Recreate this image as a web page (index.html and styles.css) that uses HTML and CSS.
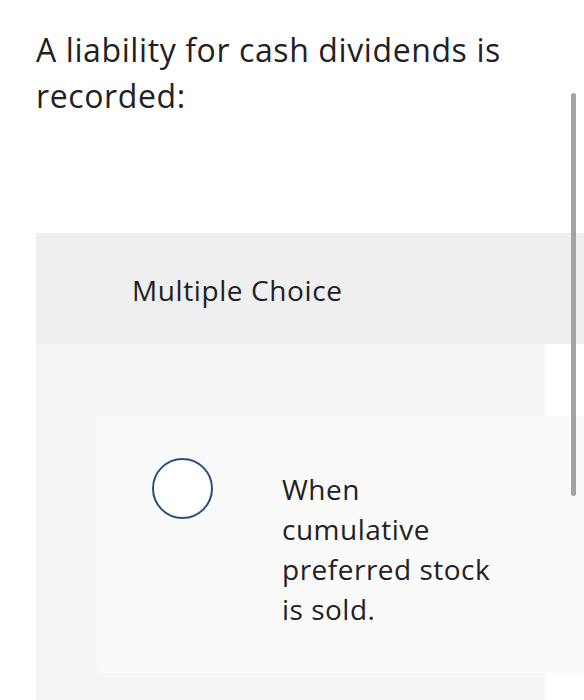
FILE: index.html
```html
<!DOCTYPE html>
<html>
<head>
<meta charset="utf-8">
<link rel="stylesheet" href="styles.css">
</head>
<body>
<div class="page">
  <h1 class="question">A liability for cash dividends is recorded:</h1>
  <section class="panel">
    <div class="panel-head">Multiple Choice</div>
    <div class="panel-body">
      <label class="option">
        <span class="radio"></span>
        <span class="option-text">When cumulative preferred stock is sold.</span>
      </label>
    </div>
  </section>
</div>
<div class="scrollbar"></div>
</body>
</html>
```
FILE: styles.css
```css
html, body {
  margin: 0;
  padding: 0;
  background: #ffffff;
  overflow: hidden;
}
body {
  width: 584px;
  height: 700px;
  font-family: "Open Sans", "Liberation Sans", sans-serif;
  color: #222222;
}
.page {
  padding: 27px 0 0 36px;
}
.question {
  margin: 0;
  width: 500px;
  font-size: 32px;
  font-weight: 400;
  line-height: 46px;
  letter-spacing: 0.6px;
}
.panel {
  margin-top: 114px;
}
.panel-head {
  background: #efefef;
  height: 111px;
  box-sizing: border-box;
  padding: 41px 0 0 96px;
  font-size: 28px;
  line-height: 32px;
  letter-spacing: 0.6px;
}
.panel-body {
  width: 509px;
  background: #f5f5f5;
  padding-top: 72px;
  height: 284px;
}
.option {
  margin-left: 60px;
  width: 488px;
  height: 257px;
  box-sizing: border-box;
  background: #fafafa;
  border-radius: 6px 0 0 6px;
  display: flex;
  align-items: flex-start;
  padding: 42px 0 0 56px;
}
.radio {
  flex: none;
  width: 61px;
  height: 61px;
  box-sizing: border-box;
  border: 2px solid #28507f;
  border-radius: 50%;
  background: #ffffff;
}
.option-text {
  margin-left: 69px;
  margin-top: 11px;
  width: 214px;
  font-size: 28px;
  line-height: 40px;
  letter-spacing: 0.5px;
}
.scrollbar {
  position: absolute;
  left: 571px;
  top: 93px;
  width: 5px;
  height: 403px;
  border-radius: 3px;
  background: #a3a3a3;
}
```
